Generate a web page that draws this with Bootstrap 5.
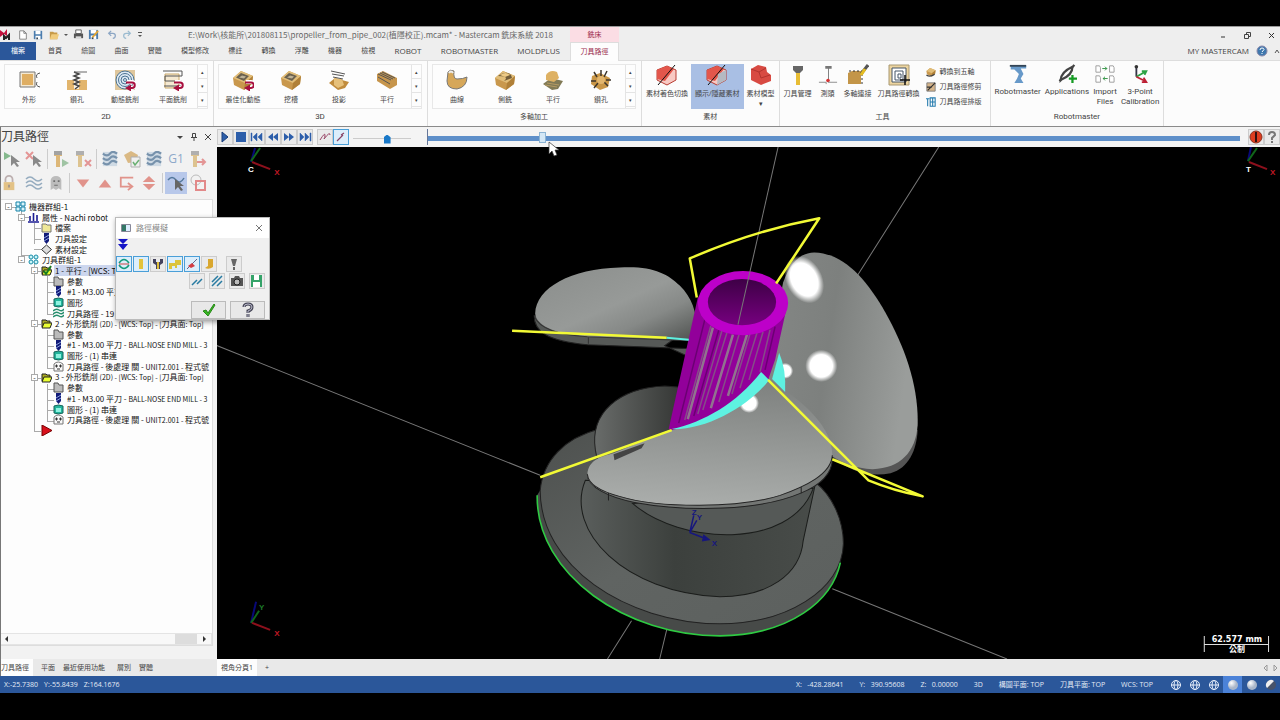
<!DOCTYPE html>
<html lang="zh-Hant">
<head>
<meta charset="utf-8">
<meta name="viewport" content="width=device-width, initial-scale=1">
<title>Mastercam 銑床系統 2018</title>
<link rel="stylesheet" href="https://cdn.jsdelivr.net/npm/bootstrap@5.3.0/dist/css/bootstrap.min.css">
<script src="https://cdn.jsdelivr.net/npm/bootstrap@5.3.0/dist/js/bootstrap.bundle.min.js"></script>
<style>
:root{--ui:"Open Sans","Noto Sans CJK TC",sans-serif;--chrome:#eeeeee;--blue:#2b579a;--ink:#444}
body{font-family:var(--ui);font-size:7px;line-height:10px;color:var(--ink);background:#000;padding:26px 0 27px}
.latin{font-size:8px}
.ribbon .latin{font-family:Roboto,"Noto Sans CJK TC",sans-serif}
svg{display:block;flex:none}
button,.btn{font-size:inherit;line-height:inherit;color:inherit;border-radius:0}
.btn{--bs-btn-color:var(--ink);--bs-btn-border-width:0}
.titlebar{height:16px;background:var(--chrome);border-top:1px solid #999}
.quick{width:188px}
.quick button{width:15px;height:15px}
.doc-title{width:382px;font-size:8px;font-family:"Noto Sans CJK TC",sans-serif;white-space:nowrap;color:#666}
.context{width:49px;background:#fbdde4;color:#9b2c4c}
.wincontrols{gap:14px;padding-right:4px}
.menu{height:19px;background:var(--chrome);border-bottom:1px solid #ddd}
.menu a{color:var(--ink);text-decoration:none;white-space:nowrap}
.menu .file-tab{width:36px;background:var(--blue);color:#fff}
.tabset{width:534px;padding:0 10px 0 12px}
.menu .active-tab{width:49px;height:19px;background:#fdfdfd;color:#9b2c4c;border:1px solid #ddd;border-bottom:0}
.ribbon{height:66px;background:#fcfcfc;border-bottom:1px solid #8a8a8a}
.group{border-right:1px solid #ddd;padding-top:3px}
.group-name{height:16px;line-height:16px;text-align:center}
.gallery{height:45px;border:1px solid #e8e8e8;background:#fdfdfd}
.tool{height:45px;gap:4px;white-space:nowrap;text-align:center}
.gallery .tool{width:48px;height:43px}
.plain .tool{gap:3px}
.tight{gap:6px}
.snug{gap:3px}
.tool.on{background:#a9bfe4}
.spin{width:10px;border-left:1px solid #e4e4e4}
.spin button{height:14px;border-bottom:1px solid #e4e4e4;font-size:5px;line-height:12px}
.w-gal{width:214px;padding-left:4px;padding-right:5px}
.side{width:217px;background:#f2f2f2;border-left:1px solid #777}
.side-title{height:20px;font-size:12px;line-height:18px}
.iconrow{height:24px}
.iconrow .btn{width:22px;height:22px;opacity:.75}
.iconrow .btn.on{background:#b8c8ea;opacity:1}
.vsep{width:1px;height:20px;background:#ccc;margin:0 2px}
.treebox{background:#fdfdfd;border:1px solid #ddd;border-left:0;width:212px;padding-top:1px;margin-bottom:13px}
.tree{height:235px;grid-auto-rows:minmax(0,1fr);font:8px/11px "Noto Sans CJK TC",sans-serif;color:#111}
.tree li{gap:3px;white-space:nowrap;min-width:0}
.tree .fine{font-size:7px}
.tree button{width:7px;height:7px;flex:none;font-size:7px;line-height:5px;border:1px solid #aaa;background:#fff;padding:0}
.tree i{width:7px;height:7px;flex:none}
.l0{padding-left:4px}.l1{padding-left:17px}.l2{padding-left:30px}.l3{padding-left:42px}
.sel{background:linear-gradient(90deg,transparent 53px,#ccd6ee 53px)}
.treelines{left:0;top:1px}
.hscroll{height:12px;background:#f8f8f8;border:1px solid #e4e4e4;border-left:0}
.hthumb{width:22px;height:10px;background:#ddd;margin-right:2px}
.bottomtabs{height:17px;background:#e9e9e9}
.bottomtabs a{color:var(--ink);text-decoration:none}
.bottomtabs .cur{background:#fdfdfd}
.playbar{height:20px;background:#f4f4f4}
.pb{width:16px;height:16px;border:1px solid #ccc;background:#eaeaea}
.pb.on{border-color:#4a9fd8;background:#dceefb}
input[type=range]{appearance:none;background:transparent;margin:0}
.speed{width:58px;height:14px;background:linear-gradient(#ccc,#ccc) 0 8px/100% 1px no-repeat!important}
.speed::-webkit-slider-thumb{appearance:none;width:7px;height:9px;background:#1978c8;clip-path:polygon(50% 0,100% 30%,100% 100%,0 100%,0 30%);margin-top:4px}
.timeline{height:16px;border-left:1px solid #679;background:linear-gradient(#5e8fc9,#5e8fc9) 0 7px/100% 5px no-repeat!important}
.timeline::-webkit-slider-thumb{appearance:none;width:7px;height:11px;background:#d4e7f5;border:1px solid #8cb4d4}
.dialogbox{left:115px;top:90px;width:155px;height:103px;background:#f0f0f0;border:1px solid #bbb;box-shadow:1px 2px 5px #0006}
.dialogbox header{height:20px;background:#fff;font-size:8px;color:#888}
.drow{gap:1px;height:17px}
.okb{width:35px;height:18px;border:1px solid #bbb;background:#e8e8e8}
.scene{background:#000;min-height:0}
.scene svg{width:100%;height:100%}
.statusbar{height:17px;background:var(--blue);color:#e4ebf6;white-space:nowrap}
.statusbar .on{background:#4b82d8}
.statusbar button{width:19px;height:17px;padding:0;border:0;background:none}
.stat{gap:16px;padding-right:13px}
.coords{gap:6px}
.pointer{left:548px;top:14px}
</style>
</head>
<body class="vh-100 d-flex flex-column overflow-hidden m-0">
<svg width="0" height="0" class="position-absolute" aria-hidden="true">
<defs>
<g id="loop"><path d="M3 2h5a3 3 0 0 1 0 6H6" fill="none" stroke="#fff" stroke-width="4"/><path d="M2 2.500h6a2.700 2.700 0 0 1 0 5.500H6" fill="none" stroke="#a8103f" stroke-width="2"/><path d="M7 4.500L1 8l6 3.500z" fill="#a8103f"/></g>
<symbol id="contour" viewBox="0 0 22 22"><path d="M2 3h15v15H2z" fill="#f5e9d2" stroke="#777"/><path d="M4 5h11v11H4z" fill="#dfae62"/><path d="M22 4q-5 1-3 5m3 9q-5-1-3-5" fill="none" stroke="#555"/></symbol>
<symbol id="drill" viewBox="0 0 22 22"><path d="M1 11h20v10H1z" fill="#e2b56d"/><path d="M8 11h5v9H8z" fill="#faf3e5"/><path d="M8 3l5 2-5 2 5 2-5 2 5 2-5 2 5 2-4 3" fill="none" stroke="#444" stroke-width="1.500"/><path d="M8 3h13" stroke="#666"/></symbol>
<symbol id="dyn" viewBox="0 0 22 22"><path d="M1 1h20v20H1z" fill="#dfc79d"/><g fill="#dce9f4" stroke="#4d7492"><circle cx="11" cy="11" r="9"/><circle cx="11" cy="11" r="6.500"/><circle cx="11" cy="11" r="4"/><circle cx="11" cy="11" r="1.500"/></g><use href="#loop" x="10" y="11"/></symbol>
<symbol id="face" viewBox="0 0 22 22"><path d="M3 5h14v14H3z" fill="#f5e9d2" stroke="#c9a86b"/><path d="M1 2h19v5H3v5h17v5H2" fill="none" stroke="#555"/><use href="#loop" x="10" y="11"/></symbol>
<symbol id="block" viewBox="0 0 22 22"><path d="M1 9L9 2l12 5-1 8-8 6L2 16z" fill="#c9984d"/><path d="M1 9L9 2l12 5-8 7z" fill="#e1bd78"/><path d="M13 14l8-7-1 8-8 6z" fill="#b08038"/></symbol>
<symbol id="pocketd" viewBox="0 0 22 22"><use href="#block"/><path d="M4 8.500L9 4l8 3-5 5z" fill="#6b614e"/><path d="M7 8.500l3-2 4 1-2 2z" fill="#bdb195"/><use href="#loop" x="11" y="11"/></symbol>
<symbol id="pocket" viewBox="0 0 22 22"><use href="#block"/><path d="M4 8.500L9 4l8 3-5 5z" fill="#6b614e"/><path d="M7 8.500l3-2 4 1-2 2z" fill="#bdb195"/></symbol>
<symbol id="project" viewBox="0 0 22 22"><path d="M1 14l6-5 14 4-4 6-7 2z" fill="#c18c3d"/><path d="M6 9l8 1 2 6-6 3-4-3z" fill="#e6c07a"/><path d="M3 2l14 3M4 5l12 2M5 8l10 2" stroke="#555"/></symbol>
<symbol id="parallel" viewBox="0 0 22 22"><path d="M1 5l6-3 14 7v7l-7 4L1 12z" fill="#c6954c"/><path d="M2 5l13 6M4 4l13 6M6 3l13 6M2 8l12 7" stroke="#555"/></symbol>
<symbol id="curve" viewBox="0 0 22 22"><path d="M2 3q2-3 6-1-1 8 3 8 6 0 10-2 0 10-10 12Q1 20 1 12z" fill="#d6a759" stroke="#777"/><path d="M3 4q2-3 4 0" fill="none" stroke="#eee" stroke-width="2"/></symbol>
<symbol id="swarf" viewBox="0 0 22 22"><use href="#block"/><path d="M4 7q8-6 13-1l1 3-8 3q6-5-6-5" fill="#725d39"/><path d="M6 6q6-4 10 0l-5 2z" fill="#edca85"/></symbol>
<symbol id="mpar" viewBox="0 0 22 22"><path d="M1 15l8-6 12 3-5 8-6 1z" fill="#817a56"/><path d="M4 6q4-6 11-3l2 6-5 4-8-2z" fill="#deb163"/><path d="M3 16l12 2M5 14l12 2" stroke="#b79c64"/></symbol>
<symbol id="mdrill" viewBox="0 0 22 22"><path d="M2 7l8-3 10 5-2 9-8 3L1 15z" fill="#c99647"/><path d="M4 3l3 5M17 2l-3 6M4 19l4-5M11 1v6M18 17l-4-4M1 12h5M16 11h5" stroke="#3c352b" stroke-width="1.500"/><circle cx="11" cy="11" r="4" fill="#e2b56d"/></symbol>
<symbol id="cube" viewBox="0 0 22 22"><path d="M1 6L11 2l9 4v10l-9 5-10-5z" fill="#f8c9c3" stroke="#b83c32"/><path d="M1 6L11 2l7 3-9 12-8-2z" fill="#e3564b"/></symbol>
<symbol id="cubeline" viewBox="0 0 22 22"><use href="#cube"/><path d="M19 1L2 21" stroke="#111"/></symbol>
<symbol id="cubegray" viewBox="0 0 22 22"><use href="#cube"/><path d="M12 10l8-4v10l-9 5z" fill="#b5b9c2"/><path d="M19 1L2 21" stroke="#111"/></symbol>
<symbol id="stock" viewBox="0 0 22 22"><path d="M1 5l7-4 8 2 1 5 4 3v6l-10 4-10-5z" fill="#d84a42"/><path d="M1 5l8 3 7-4M9 8l2 6 9-3" fill="none" stroke="#b3342e"/></symbol>
<symbol id="mill" viewBox="0 0 22 22"><path d="M6 2h10v4l-3 3H9L6 6z" fill="#666"/><path d="M9 9h4v12H9z" fill="#e8bd34"/></symbol>
<symbol id="probe" viewBox="0 0 22 22"><path d="M8 1h7v3h-3v12h-1V4H8z" fill="#777"/><circle cx="11" cy="17" r="2" fill="#d63131"/><path d="M1 19h8v2m2-2h10" stroke="#888" fill="none"/></symbol>
<symbol id="link" viewBox="0 0 22 22"><path d="M1 9l4-2h9v13H1z" fill="#c39548"/><path d="M2 7h13v13" fill="none" stroke="#333" stroke-dasharray="2"/><path d="M21 1l-7 9" stroke="#555" stroke-width="3"/><path d="M18 5l-4 6" stroke="#e5bd20" stroke-width="3"/></symbol>
<symbol id="xform" viewBox="0 0 22 22"><path d="M1 1h20v20H1z" fill="#ecd49f" stroke="#a89873"/><path d="M4 4h14v14H4zM7 7h8v9H7zM10 10h3v4h-3z" fill="#fff" stroke="#456"/><path d="M17 11v10m-5-5h10" fill="none" stroke="#111" stroke-width="1.500"/></symbol>
<symbol id="robot" viewBox="0 0 22 22"><path d="M3 2h17v3h-6l3 6-3 5 3 5H7l3-5 2-5-5-5H3z" fill="#6799c9"/><path d="M2 2h18" stroke="#345" stroke-width="2"/></symbol>
<symbol id="app" viewBox="0 0 22 22"><path d="M4 18q0-9 13-15 0 9-12 14zM3 19l2-4M16 5l3-4" fill="none" stroke="#444" stroke-width="2.500"/><path d="M17 12v9m-4-5h9" stroke="#169b24" stroke-width="2.500"/></symbol>
<symbol id="import" viewBox="0 0 22 22"><path d="M1 2h4l1 2v5H1zM16 2h4l1 2v5h-5zM1 13h4l1 2v5H1zM16 13h4l1 2v5h-5z" fill="#fff" stroke="#999"/><path d="M8 5h5m-2-2l2 2-2 2M14 16H9m2-2l-2 2 2 2" fill="none" stroke="#258c38"/></symbol>
<symbol id="axes3" viewBox="0 0 22 22"><path d="M7 3v11" stroke="#334" stroke-width="2"/><path d="M7 14l11-6m-5 0l5 0-2 4" stroke="#2da344" stroke-width="2" fill="none"/><path d="M7 14l10 5m-2-4l3 5-5 0" stroke="#bd2035" stroke-width="2" fill="none"/><circle cx="7" cy="3" r="2" fill="#333"/></symbol>
<symbol id="trim" viewBox="0 0 12 12"><path d="M1 1h10v10H1z" fill="#d5b48a" stroke="#777"/><path d="M2 10l9-9M1 6h6" stroke="#333" stroke-width="1.500"/></symbol>
<symbol id="nest" viewBox="0 0 12 12"><path d="M0 2h4M2 2v9M5 1h6v10H5zM8 1v10M5 6h6" stroke="#267cae" fill="none" stroke-width="1.300"/></symbol>
<symbol id="doc" viewBox="0 0 12 12"><path d="M2 1h5l3 3v7H2zM7 1v3h3" fill="#fff" stroke="#777"/></symbol>
<symbol id="disk" viewBox="0 0 12 12"><path d="M1 1h10v10H1z" fill="#4b7dae"/><path d="M3 1h6v4H3zM3 7h6v4H3z" fill="#fff"/><path d="M4 9h2v2H4z" fill="#345"/></symbol>
<symbol id="fold" viewBox="0 0 12 12"><path d="M1 2h4l1 1h4v8H1z" fill="#c79a48"/><path d="M3 5h9l-2 6H1z" fill="#f0cb7c"/></symbol>
<symbol id="print" viewBox="0 0 12 12"><path d="M3 1h6v4H3z" fill="#fff" stroke="#555"/><path d="M1 5h10v5H1z" fill="#555"/><path d="M3 8h6v3H3z" fill="#ddd"/></symbol>
<symbol id="saveas" viewBox="0 0 12 12"><use href="#disk"/><path d="M11 2L5 9" stroke="#e4a632" stroke-width="2"/></symbol>
<symbol id="undo" viewBox="0 0 12 12"><path d="M3 4h4a3 3 0 0 1 0 6M5 1L2 4l3 3" fill="none" stroke="#8ca6c4" stroke-width="1.500"/></symbol>
<symbol id="redo" viewBox="0 0 12 12"><path d="M9 4H5a3 3 0 0 0 0 6M7 1l3 3-3 3" fill="none" stroke="#9bbbd0" stroke-width="1.500"/></symbol>
<symbol id="ghost" viewBox="0 0 18 18"><path d="M3 17V6a6 5 0 0 1 12 0v11l-3-2-3 2-3-2z" fill="#aaa"/><path d="M6 6h2v2H6zm5 0h2v2h-2zM7 11h4v1H7z" fill="#444"/></symbol>
<symbol id="waves" viewBox="0 0 18 18"><path d="M1 5q4-4 8 0t8 0M1 9q4-4 8 0t8 0M1 13q4-4 8 0t8 0" fill="none" stroke="#7795af" stroke-width="1.500"/></symbol>
<symbol id="wavesb" viewBox="0 0 18 18"><path d="M1 1h16v16H1z" fill="#c4d3e0"/><path d="M1 3q5 4 8 0t8 0M1 8q5 4 8 0t8 0M1 13q5 4 8 0t8 0" fill="none" stroke="#4e7295" stroke-width="2.500"/></symbol>
<symbol id="cur" viewBox="0 0 18 18"><path d="M8 5v11l3-3 3 4 2-1-3-4h4z" fill="#666"/></symbol>
<symbol id="selgo" viewBox="0 0 18 18"><path d="M1 2l7 4-7 4z" fill="#61a66c"/><use href="#cur"/></symbol>
<symbol id="selno" viewBox="0 0 18 18"><path d="M1 2l7 7M8 2L1 9" stroke="#df7777" stroke-width="2"/><use href="#cur"/></symbol>
<symbol id="toolg" viewBox="0 0 18 18"><path d="M2 1h8v5H8v11H4V6H2z" fill="#d7a450"/><path d="M2 1h8v4H2z" fill="#888"/><path d="M10 9l7 4-7 4z" fill="#85b58a"/></symbol>
<symbol id="toolx" viewBox="0 0 18 18"><path d="M2 1h8v5H8v11H4V6H2z" fill="#d7b470"/><path d="M2 1h8v4H2z" fill="#999"/><path d="M11 10l6 6m0-6l-6 6" stroke="#df7777" stroke-width="2"/></symbol>
<symbol id="toola" viewBox="0 0 18 18"><path d="M2 1h8v5H8v11H4V6H2z" fill="#d7b470"/><path d="M2 1h8v4H2z" fill="#999"/><path d="M8 12h8m-3-3l3 3-3 3" stroke="#df7777" stroke-width="2" fill="none"/></symbol>
<symbol id="verify" viewBox="0 0 18 18"><path d="M1 5l7-4 7 4-2 7-8 1z" fill="#d2a660"/><path d="M8 7h9v10H8z" fill="#eee" stroke="#999"/><path d="M10 12l2 3 4-5" stroke="#3c9a48" fill="none" stroke-width="1.500"/></symbol>
<symbol id="lock" viewBox="0 0 18 18"><path d="M5 8V5a4 4 0 0 1 8 0v3" fill="none" stroke="#a99" stroke-width="2"/><path d="M3 8h12v9H3z" fill="#deb263"/><path d="M8 11h2v3H8z" fill="#876"/></symbol>
<symbol id="dn" viewBox="0 0 18 18"><path d="M2 5h14l-7 9z" fill="#dc7469"/></symbol>
<symbol id="up" viewBox="0 0 18 18"><path d="M2 14h14L9 5z" fill="#dc7469"/></symbol>
<symbol id="ins" viewBox="0 0 18 18"><path d="M16 3H2v10h11M10 9l5 4-5 4" fill="none" stroke="#dc7469" stroke-width="2"/></symbol>
<symbol id="ud" viewBox="0 0 18 18"><path d="M2 8h14L9 1zM2 10h14l-7 7z" fill="#dc7469"/></symbol>
<symbol id="selw" viewBox="0 0 18 18"><path d="M1 6q4-5 8 0t8-2" fill="none" stroke="#54789c" stroke-width="1.500"/><use href="#cur"/></symbol>
<symbol id="selq" viewBox="0 0 18 18"><circle cx="7" cy="6" r="5" fill="none" stroke="#aaa"/><path d="M7 7h9v9H7z" fill="none" stroke="#d66" stroke-width="2"/></symbol>
<symbol id="mach" viewBox="0 0 11 11"><path d="M1 1h4v4H1zM6 1h4v4H6zM1 6h4v4H1zM6 6h4v4H6z" fill="#d8f4fb" stroke="#1683a8"/></symbol>
<symbol id="bars" viewBox="0 0 11 11"><path d="M2 4v5M5.500 1v8M9 3v6M0 10h11" stroke="#1b1b92" stroke-width="1.600"/></symbol>
<symbol id="tfold" viewBox="0 0 11 11"><path d="M1 2h4l1 1h4v7H1z" fill="#efe898" stroke="#777"/></symbol>
<symbol id="bit" viewBox="0 0 11 11"><path d="M3 0h5v8L5.500 11 3 8z" fill="#111a78"/><path d="M3 5l5-3M3 8l5-3" stroke="#8ba1de"/></symbol>
<symbol id="dia" viewBox="0 0 11 11"><path d="M5.500 1l5 4.500-5 4.500-5-4.500z" fill="#ddd" stroke="#333"/></symbol>
<symbol id="grp" viewBox="0 0 11 11"><g fill="#c9f5f8" stroke="#188ba7"><circle cx="3" cy="3" r="2"/><circle cx="8" cy="3" r="2"/><circle cx="3" cy="8" r="2"/><circle cx="8" cy="8" r="2"/></g></symbol>
<symbol id="open" viewBox="0 0 11 11"><path d="M1 2h4l1 1h3v6H1z" fill="#aa2" stroke="#222"/><path d="M3 5h8l-2 5H1z" fill="#eaff33" stroke="#222"/></symbol>
<symbol id="openg" viewBox="0 0 11 11"><use href="#open"/><path d="M3 6l2 3 5-8" stroke="#187d22" stroke-width="2" fill="none"/></symbol>
<symbol id="gfold" viewBox="0 0 11 11"><path d="M1 1h4l1 2h4v7H1z" fill="#bbb" stroke="#555"/></symbol>
<symbol id="geo" viewBox="0 0 11 11"><path d="M1 2q4.500-2 9 0v7q-4.500 2-9 0z" fill="#22b49b" stroke="#17645a"/><path d="M3 4h5v4H3z" fill="#8ff2e0"/></symbol>
<symbol id="path" viewBox="0 0 11 11"><path d="M0 3q3-3 6-1t5-1M0 6q3-3 6-1t5-1M0 9q3-3 6-1t5-1" fill="none" stroke="#278e6e" stroke-width="1.500"/></symbol>
<symbol id="face2" viewBox="0 0 11 11"><path d="M1 10V3q4-4 9 0v7z" fill="#f8f8f8" stroke="#777"/><path d="M3 4h1v2H3zm4 0h1v2H7zM4 8h3" stroke="#333" fill="#333"/></symbol>
<symbol id="arrow" viewBox="0 0 11 11"><path d="M1 0l10 5.500L1 11z" fill="#d9101c" stroke="#700"/></symbol>
<symbol id="tri" viewBox="0 0 14 14"><path d="M4 2l6 5-6 5z" fill="#2c5eaa" stroke="#183d7a"/></symbol>
<symbol id="globe" viewBox="0 0 12 12"><circle cx="6" cy="6" r="4.500" fill="none" stroke="#e7eefb"/><ellipse cx="6" cy="6" rx="2" ry="4.500" fill="none" stroke="#e7eefb"/><path d="M1 6h10" stroke="#e7eefb"/></symbol>
<radialGradient id="ball" cx=".35" cy=".3"><stop offset="0" stop-color="#fff"/><stop offset="1" stop-color="#a9b6c9"/></radialGradient>
</defs></svg>

<header>
<div class="titlebar d-flex align-items-stretch">
 <div class="quick d-flex align-items-center">
  <svg width="14" height="14" viewBox="0 0 14 14"><path d="M0 2l4 3 3-4v7L4 6 0 9z" fill="#c2123d"/><path d="M4 12V8l2 2 3-3v5" fill="none" stroke="#222" stroke-width="2"/></svg>
  <button class="btn p-0 ms-1" aria-label="新檔"><svg width="10" height="10"><use href="#doc"/></svg></button>
  <button class="btn p-0" aria-label="儲存"><svg width="10" height="10"><use href="#disk"/></svg></button>
  <button class="btn p-0" aria-label="開啟"><svg width="12" height="10"><use href="#fold"/></svg></button>
  <svg width="6" height="6" viewBox="0 0 6 6"><path d="M1 2h4L3 4z" fill="#555"/></svg>
  <button class="btn p-0 ms-1" aria-label="列印"><svg width="11" height="11"><use href="#print"/></svg></button>
  <button class="btn p-0" aria-label="另存"><svg width="11" height="11"><use href="#saveas"/></svg></button>
  <button class="btn p-0 ms-1" aria-label="復原"><svg width="10" height="10"><use href="#undo"/></svg></button>
  <button class="btn p-0" aria-label="重做"><svg width="10" height="10"><use href="#redo"/></svg></button>
  <svg width="6" height="6" viewBox="0 0 6 6"><path d="M1 0h4v1H1zM1 3h4L3 5z" fill="#555"/></svg>
 </div>
 <div class="doc-title align-self-center">E:\Work\核能所\201808115\propeller_from_pipe_002(植隱校正).mcam* - Mastercam 銑床系統 2018</div>
 <div class="context d-flex align-items-center justify-content-center">銑床</div>
 <div class="wincontrols ms-auto d-flex align-items-center">
  <button class="btn p-0" aria-label="最小化"><svg width="10" height="10"><path d="M3 7h4" stroke="#333"/></svg></button>
  <button class="btn p-0" aria-label="還原"><svg width="10" height="10"><path d="M2.500 4.500h4v4h-4zM4.500 4V2.500h4v4H7" fill="none" stroke="#444"/></svg></button>
  <button class="btn p-0" aria-label="關閉"><svg width="10" height="10"><path d="M3 3l5 5m0-5L3 8" stroke="#333"/></svg></button>
 </div>
</div>
<nav class="menu d-flex align-items-center">
 <a href="#" class="file-tab h-100 d-flex align-items-center justify-content-center">檔案</a>
 <div class="tabset d-flex justify-content-between align-items-center">
  <a href="#">首頁</a><a href="#">繪圖</a><a href="#">曲面</a><a href="#">實體</a><a href="#">模型修改</a><a href="#">標註</a><a href="#">轉換</a><a href="#">浮雕</a><a href="#">機器</a><a href="#">檢視</a><a href="#" class="latin">ROBOT</a><a href="#" class="latin">ROBOTMASTER</a><a href="#" class="latin">MOLDPLUS</a>
 </div>
 <a href="#" class="active-tab d-flex align-items-center justify-content-center">刀具路徑</a>
 <a href="#" class="latin ms-auto">MY MASTERCAM</a>
 <svg width="31" height="12"><circle cx="13" cy="6" r="5" fill="#3f78ad" stroke="#88a"/><path d="M11 5q0-2 2-2t2 1.500L13 7m0 1v1" fill="none" stroke="#fff"/><path d="M26 8l2-3 2 3" fill="none" stroke="#555"/></svg>
</nav>
<div class="ribbon d-flex">
 <section class="group w-gal">
  <div class="gallery d-flex">
   <button class="btn p-0 tool d-flex flex-column align-items-center justify-content-center"><svg width="22" height="22"><use href="#contour"/></svg>外形</button>
   <button class="btn p-0 tool d-flex flex-column align-items-center justify-content-center"><svg width="22" height="22"><use href="#drill"/></svg>鑽孔</button>
   <button class="btn p-0 tool d-flex flex-column align-items-center justify-content-center"><svg width="22" height="22"><use href="#dyn"/></svg>動態銑削</button>
   <button class="btn p-0 tool d-flex flex-column align-items-center justify-content-center"><svg width="22" height="22"><use href="#face"/></svg>平面銑削</button>
   <div class="spin ms-auto d-flex flex-column"><button class="btn p-0">▴</button><button class="btn p-0">▾</button><button class="btn p-0">▾</button></div>
  </div>
  <div class="group-name latin">2D</div>
 </section>
 <section class="group w-gal">
  <div class="gallery d-flex">
   <button class="btn p-0 tool d-flex flex-column align-items-center justify-content-center"><svg width="22" height="22"><use href="#pocketd"/></svg>最佳化動態</button>
   <button class="btn p-0 tool d-flex flex-column align-items-center justify-content-center"><svg width="22" height="22"><use href="#pocket"/></svg>挖槽</button>
   <button class="btn p-0 tool d-flex flex-column align-items-center justify-content-center"><svg width="22" height="22"><use href="#project"/></svg>投影</button>
   <button class="btn p-0 tool d-flex flex-column align-items-center justify-content-center"><svg width="22" height="22"><use href="#parallel"/></svg>平行</button>
   <div class="spin ms-auto d-flex flex-column"><button class="btn p-0">▴</button><button class="btn p-0">▾</button><button class="btn p-0">▾</button></div>
  </div>
  <div class="group-name latin">3D</div>
 </section>
 <section class="group w-gal">
  <div class="gallery d-flex">
   <button class="btn p-0 tool d-flex flex-column align-items-center justify-content-center"><svg width="22" height="22"><use href="#curve"/></svg>曲線</button>
   <button class="btn p-0 tool d-flex flex-column align-items-center justify-content-center"><svg width="22" height="22"><use href="#swarf"/></svg>側銑</button>
   <button class="btn p-0 tool d-flex flex-column align-items-center justify-content-center"><svg width="22" height="22"><use href="#mpar"/></svg>平行</button>
   <button class="btn p-0 tool d-flex flex-column align-items-center justify-content-center"><svg width="22" height="22"><use href="#mdrill"/></svg>鑽孔</button>
   <div class="spin ms-auto d-flex flex-column"><button class="btn p-0">▴</button><button class="btn p-0">▾</button><button class="btn p-0">▾</button></div>
  </div>
  <div class="group-name">多軸加工</div>
 </section>
 <section class="group plain px-1">
  <div class="d-flex snug">
   <button class="btn p-0 tool d-flex flex-column align-items-center"><svg width="22" height="22"><use href="#cubeline"/></svg>素材著色切換</button>
   <button class="btn p-0 px-1 tool on d-flex flex-column align-items-center"><svg width="22" height="22"><use href="#cubegray"/></svg>顯示/隱藏素材</button>
   <button class="btn p-0 tool d-flex flex-column align-items-center"><svg width="22" height="22"><use href="#stock"/></svg><span>素材模型<br>▾</span></button>
  </div>
  <div class="group-name">素材</div>
 </section>
 <section class="group plain ps-1 pe-2">
  <div class="d-flex tight">
   <button class="btn p-0 tool d-flex flex-column align-items-center"><svg width="22" height="22"><use href="#mill"/></svg>刀具管理</button>
   <button class="btn p-0 tool d-flex flex-column align-items-center"><svg width="20" height="22"><use href="#probe"/></svg>測頭</button>
   <button class="btn p-0 tool d-flex flex-column align-items-center"><svg width="22" height="22"><use href="#link"/></svg>多軸連接</button>
   <button class="btn p-0 tool d-flex flex-column align-items-center"><svg width="22" height="22"><use href="#xform"/></svg>刀具路徑轉換</button>
   <div class="d-flex flex-column justify-content-around">
    <button class="btn p-0 d-flex align-items-center gap-1"><svg width="10" height="10" viewBox="0 0 22 22"><use href="#block"/><path d="M1 18q9 5 18-2" stroke="#444" fill="none" stroke-width="3"/></svg>轉換到五軸</button>
    <button class="btn p-0 d-flex align-items-center gap-1"><svg width="10" height="10"><use href="#trim"/></svg>刀具路徑修剪</button>
    <button class="btn p-0 d-flex align-items-center gap-1"><svg width="10" height="10"><use href="#nest"/></svg>刀具路徑排版</button>
   </div>
  </div>
  <div class="group-name">工具</div>
 </section>
 <section class="group plain px-1">
  <div class="d-flex gap-1 latin">
   <button class="btn p-0 tool d-flex flex-column align-items-center"><svg width="20" height="20"><use href="#robot"/></svg>Robotmaster</button>
   <button class="btn p-0 tool d-flex flex-column align-items-center"><svg width="20" height="20"><use href="#app"/></svg>Applications</button>
   <button class="btn p-0 tool d-flex flex-column align-items-center"><svg width="20" height="20"><use href="#import"/></svg><span>Import<br>Files</span></button>
   <button class="btn p-0 tool d-flex flex-column align-items-center"><svg width="20" height="20"><use href="#axes3"/></svg><span>3-Point<br>Calibration</span></button>
  </div>
  <div class="group-name latin">Robotmaster</div>
 </section>
</div>
</header>

<main class="flex-grow-1 d-flex position-relative" style="min-height:0">
 <aside class="side flex-shrink-0 d-flex flex-column">
  <div class="side-title d-flex align-items-center">刀具路徑
   <div class="ms-auto me-1 d-flex gap-1"><svg width="10" height="10"><path d="M2 4h6L5 7z" fill="#444"/></svg><svg width="10" height="10"><path d="M3.500 1.500h3v4h-3zM2 5.500h6M5 6v3" stroke="#444" fill="none"/></svg><svg width="10" height="10"><path d="M2 2l6 6m0-6L2 8" stroke="#444"/></svg></div>
  </div>
  <div class="iconrow d-flex align-items-center">
   <button class="btn p-0" aria-label="全選"><svg class="mx-auto" width="18" height="18"><use href="#selgo"/></svg></button><button class="btn p-0" aria-label="取消"><svg class="mx-auto" width="18" height="18"><use href="#selno"/></svg></button><span class="vsep"></span>
   <button class="btn p-0" aria-label="重新計算"><svg class="mx-auto" width="18" height="18"><use href="#toolg"/></svg></button><button class="btn p-0" aria-label="重新計算失效"><svg class="mx-auto" width="18" height="18"><use href="#toolx"/></svg></button><span class="vsep"></span>
   <button class="btn p-0" aria-label="模擬"><svg class="mx-auto" width="16" height="16"><use href="#wavesb"/></svg></button><button class="btn p-0" aria-label="驗證"><svg class="mx-auto" width="18" height="18"><use href="#verify"/></svg></button><button class="btn p-0" aria-label="選項"><svg class="mx-auto" width="16" height="16"><use href="#wavesb"/></svg></button><button class="btn p-0" style="font-size:12px;color:#6d91bd">G1</button><button class="btn p-0" aria-label="進給"><svg class="mx-auto" width="18" height="18"><use href="#toola"/></svg></button>
  </div>
  <div class="iconrow d-flex align-items-center">
   <button class="btn p-0" aria-label="鎖定"><svg width="16" height="16"><use href="#lock"/></svg></button><button class="btn p-0" aria-label="顯示"><svg class="mx-auto" width="18" height="18"><use href="#waves"/></svg></button><button class="btn p-0" aria-label="後處理"><svg class="mx-auto" width="16" height="16"><use href="#ghost"/></svg></button><span class="vsep"></span>
   <button class="btn p-0" aria-label="下移"><svg class="mx-auto" width="16" height="16"><use href="#dn"/></svg></button><button class="btn p-0" aria-label="上移"><svg class="mx-auto" width="16" height="16"><use href="#up"/></svg></button><button class="btn p-0" aria-label="插入"><svg class="mx-auto" width="18" height="16"><use href="#ins"/></svg></button><button class="btn p-0" aria-label="捲動"><svg class="mx-auto" width="16" height="16"><use href="#ud"/></svg></button><span class="vsep"></span>
   <button class="btn p-0 on" aria-label="僅顯示已選"><svg class="mx-auto" width="18" height="18"><use href="#selw"/></svg></button><button class="btn p-0" aria-label="顯示關聯"><svg class="mx-auto" width="18" height="18"><use href="#selq"/></svg></button>
  </div>
  <div class="treebox position-relative flex-grow-1 d-flex flex-column mt-1">
   <svg class="treelines position-absolute" width="60" height="235"><path d="M20 10v44M11 6h5M24 16h4M33 22v21M33 27h7M33 38h7M33 48h7M20 54h8M33 60v170h7M33 70h7M46 75v39M46 81h7M46 91h7M46 102h7M46 113h7M33 123h7M46 129v38M46 134h7M46 145h7M46 156h7M46 167h7M33 177h7M46 183v38M46 188h7M46 199h7M46 209h7M46 220h7" stroke="#aaa" fill="none" shape-rendering="crispEdges"/></svg>
   <ul class="tree list-unstyled m-0 d-grid position-relative">
    <li class="l0 d-flex align-items-center"><button>-</button><svg width="11" height="11"><use href="#mach"/></svg><span>機器群組-1</span></li>
    <li class="l1 d-flex align-items-center"><button>-</button><svg width="11" height="11"><use href="#bars"/></svg><span>屬性 - Nachi robot</span></li>
    <li class="l2 d-flex align-items-center"><i></i><svg width="11" height="11"><use href="#tfold"/></svg><span>檔案</span></li>
    <li class="l2 d-flex align-items-center"><i></i><svg width="11" height="11"><use href="#bit"/></svg><span>刀具設定</span></li>
    <li class="l2 d-flex align-items-center"><i></i><svg width="11" height="11"><use href="#dia"/></svg><span>素材設定</span></li>
    <li class="l1 d-flex align-items-center"><button>-</button><svg width="11" height="11"><use href="#grp"/></svg><span>刀具群組-1</span></li>
    <li class="l2 sel d-flex align-items-center"><button>-</button><svg width="11" height="11"><use href="#openg"/></svg><span>1 - 平行 - [WCS: T</span></li>
    <li class="l3 d-flex align-items-center"><i></i><svg width="11" height="11"><use href="#gfold"/></svg><span>參數</span></li>
    <li class="l3 d-flex align-items-center"><i></i><svg width="11" height="11"><use href="#bit"/></svg><span>#1 - M3.00 平刀</span></li>
    <li class="l3 d-flex align-items-center"><i></i><svg width="11" height="11"><use href="#geo"/></svg><span>圖形</span></li>
    <li class="l3 d-flex align-items-center"><i></i><svg width="11" height="11"><use href="#path"/></svg><span>刀具路徑 - 19</span></li>
    <li class="l2 d-flex align-items-center"><button>-</button><svg width="11" height="11"><use href="#open"/></svg><span>2 - 外形銑削 <span class="fine">(2D) - [WCS: Top] - [</span>刀具面<span class="fine">: Top]</span></span></li>
    <li class="l3 d-flex align-items-center"><i></i><svg width="11" height="11"><use href="#gfold"/></svg><span>參數</span></li>
    <li class="l3 d-flex align-items-center"><i></i><svg width="11" height="11"><use href="#bit"/></svg><span>#1 - M3.00 平刀 - <span class="fine">BALL-NOSE END MILL - 3</span></span></li>
    <li class="l3 d-flex align-items-center"><i></i><svg width="11" height="11"><use href="#geo"/></svg><span>圖形 - (1) 串連</span></li>
    <li class="l3 d-flex align-items-center"><i></i><svg width="11" height="11"><use href="#face2"/></svg><span>刀具路徑 - 後處理 關 - <span class="fine">UNIT2.001 - </span>程式號</span></li>
    <li class="l2 d-flex align-items-center"><button>-</button><svg width="11" height="11"><use href="#open"/></svg><span>3 - 外形銑削 <span class="fine">(2D) - [WCS: Top] - [</span>刀具面<span class="fine">: Top]</span></span></li>
    <li class="l3 d-flex align-items-center"><i></i><svg width="11" height="11"><use href="#gfold"/></svg><span>參數</span></li>
    <li class="l3 d-flex align-items-center"><i></i><svg width="11" height="11"><use href="#bit"/></svg><span>#1 - M3.00 平刀 - <span class="fine">BALL-NOSE END MILL - 3</span></span></li>
    <li class="l3 d-flex align-items-center"><i></i><svg width="11" height="11"><use href="#geo"/></svg><span>圖形 - (1) 串連</span></li>
    <li class="l3 d-flex align-items-center"><i></i><svg width="11" height="11"><use href="#face2"/></svg><span>刀具路徑 - 後處理 關 - <span class="fine">UNIT2.001 - </span>程式號</span></li>
    <li class="l2 d-flex align-items-center"><i></i><svg width="11" height="11"><use href="#arrow"/></svg></li>
   </ul>
   <div class="hscroll mt-auto d-flex align-items-center justify-content-between"><svg width="12" height="10"><path d="M7 2v6L4 5z" fill="#333"/></svg><span class="hthumb ms-auto"></span><svg width="12" height="10"><path d="M4 2v6l3-3z" fill="#333"/></svg></div>
  </div>
  <nav class="bottomtabs d-flex align-items-stretch">
   <a href="#" class="cur d-flex align-items-center pe-1">刀具路徑</a><a href="#" class="d-flex align-items-center ps-1 ms-1">平面</a><a href="#" class="d-flex align-items-center ps-2">最近使用功能</a><a href="#" class="d-flex align-items-center ps-2 ms-1">層別</a><a href="#" class="d-flex align-items-center ps-2">實體</a>
  </nav>
 </aside>

 <section class="flex-grow-1 d-flex flex-column" style="min-width:0">
  <div class="playbar d-flex align-items-center">
   <button class="btn p-0 pb" aria-label="播放"><svg width="14" height="14"><use href="#tri"/></svg></button>
   <button class="btn p-0 pb" aria-label="停止"><svg width="14" height="14"><path d="M2 2h10v10H2z" fill="#2c5eaa"/></svg></button>
   <button class="btn p-0 pb" aria-label="最前"><svg width="14" height="14"><path d="M1 3h1v8H1zM7 3L3 7l4 4zM12 3L8 7l4 4z" fill="#2c5eaa" stroke="#2c5eaa" stroke-width=".5"/></svg></button>
   <button class="btn p-0 pb" aria-label="後退"><svg width="14" height="14"><path d="M7 3L2 7l5 4zM12 3L7 7l5 4z" fill="#2c5eaa"/></svg></button>
   <button class="btn p-0 pb" aria-label="前進"><svg width="14" height="14"><path d="M2 3l5 4-5 4zM7 3l5 4-5 4z" fill="#2c5eaa"/></svg></button>
   <button class="btn p-0 pb" aria-label="最後"><svg width="14" height="14"><path d="M2 3l4 4-4 4zM7 3l4 4-4 4zM12 3h1v8h-1z" fill="#2c5eaa" stroke="#2c5eaa" stroke-width=".5"/></svg></button>
   <button class="btn p-0 pb ms-1" aria-label="軌跡"><svg width="14" height="14"><path d="M2 10q5-8 5-5T6 9q6-8 6-4" fill="none" stroke="#946"/></svg></button>
   <button class="btn p-0 pb on" aria-label="執行"><svg width="14" height="14"><path d="M3 11l6-6M7 5l3-2" fill="none" stroke="#846" stroke-width="1.200"/></svg></button>
   <input class="speed ms-1" type="range" aria-label="速度" min="0" max="100" value="60">
   <input class="timeline ms-3 flex-grow-1" type="range" aria-label="進度" min="0" max="1000" value="138">
   <button class="btn p-0 pb ms-2" aria-label="停止條件"><svg width="14" height="14"><circle cx="7" cy="7" r="6" fill="#df3d1f" stroke="#832"/><path d="M7 2v10" stroke="#311" stroke-width="2"/></svg></button>
   <button class="btn p-0 pb" aria-label="說明"><svg width="14" height="14"><path d="M4 5q0-3 3-3t3 3L7 8v2m0 1v2" fill="none" stroke="#777" stroke-width="2"/></svg></button>
  </div>
  <div class="scene flex-grow-1">
  <svg viewBox="217 148 1063 510" preserveAspectRatio="xMidYMid slice">
   <defs>
    <linearGradient id="g1" x1="0" y1="0" x2="1" y2="1"><stop offset="0" stop-color="#8a8d8b"/><stop offset=".5" stop-color="#979a98"/><stop offset=".7" stop-color="#868987"/><stop offset="1" stop-color="#4d504e"/></linearGradient>
    <linearGradient id="g2" x1="0" y1="0" x2="1" y2=".2"><stop offset="0" stop-color="#858886"/><stop offset=".5" stop-color="#7d807e"/><stop offset="1" stop-color="#9a9d9b"/></linearGradient>
    <linearGradient id="g3" x1=".5" y1="0" x2=".4" y2="1"><stop offset="0" stop-color="#7e817f"/><stop offset="1" stop-color="#aaadab"/></linearGradient>
    <linearGradient id="g4" x1="0" y1="0" x2="1" y2="0"><stop offset="0" stop-color="#5a5e5c"/><stop offset=".4" stop-color="#3c403d"/><stop offset="1" stop-color="#484c49"/></linearGradient>
    <linearGradient id="g5" x1="0" y1="0" x2="1" y2="1"><stop offset="0" stop-color="#4d504e"/><stop offset=".5" stop-color="#606462"/><stop offset="1" stop-color="#5c605e"/></linearGradient>
    <linearGradient id="g6" x1="0" y1="0" x2="1" y2="0"><stop offset="0" stop-color="#696c6a"/><stop offset="1" stop-color="#2f312f"/></linearGradient>
    <linearGradient id="hole" x1="0" y1="0" x2="0" y2="1"><stop offset="0" stop-color="#3e0046"/><stop offset="1" stop-color="#76007f"/></linearGradient>
    <radialGradient id="hot"><stop offset="0" stop-color="#fff"/><stop offset=".7" stop-color="#fff"/><stop offset="1" stop-color="#fff" stop-opacity="0"/></radialGradient>
   </defs>
   <path d="M938 148L857 276M217 345l324 130M832 588l174 70M632 620l-24 38M667 629l-7 29" stroke="#777"/>
   <path d="M538 495C537 575 628 635 720 635C790 634 832 600 840 562L842 530L541 490z" fill="#474a48"/>
   <path d="M541 490C544 460 565 438 600 429L815 482C832 495 843 520 843 543C842 590 785 623 720 623C625 622 541 565 541 490z" fill="url(#g5)" stroke="#222"/>
   <path d="M538 495C537 575 628 635 720 635C790 634 832 600 840 562" fill="none" stroke="#2fca43" stroke-width="1.600"/>
   <path d="M596 450C590 412 620 388 665 386L690 388L690 450L600 470z" fill="url(#g6)" stroke="#222"/>
   <path d="M586 480C565 530 625 592 720 596C768 596 800 574 803 540L815 484z" fill="url(#g4)" stroke="#1b1d1b"/>
   <path d="M633 503C680 544 790 550 813 488z" fill="#555957" stroke="#1b1d1b"/>
   <path d="M535 316C535 332 548 341 588 345L692 349L689 357L665 346L694 325z" fill="#565957" stroke="#222"/>
   <path d="M536 314C537 288 572 269 620 268C652 266 668 274 680 286C692 298 697 312 697 330L692 341L588 337C560 334 538 328 536 314z" fill="url(#g1)"/>
   <path d="M535 316C540 330 560 335 588 337L692 341M589 337v7" fill="none" stroke="#333"/>
   <path d="M830 455C850 472 870 477 890 473C908 468 916 450 917 430z" fill="#555"/>
   <path d="M760 400L783 283C790 263 801 253 814 253C844 254 866 280 885 313C904 347 918 385 917 425C915 452 900 468 872 469C855 468 843 463 830 455z" fill="url(#g2)"/>
   <ellipse cx="804" cy="280" rx="18" ry="25" transform="rotate(-28 804 280)" fill="url(#hot)"/>
   <circle cx="821" cy="366" r="16" fill="url(#hot)"/><circle cx="785" cy="371" r="8" fill="url(#hot)"/>
   <path d="M588 474C588 487 610 497 635 502C690 512 760 510 800 493C820 485 832 474 832 458z" fill="#737674" stroke="#222"/>
   <path d="M588 474C589 459 603 456 614 453L672 429Q730 415 768 378C790 394 832 420 832 455C831 474 805 486 780 495C740 508 660 508 620 496C601 491 588 484 588 474z" fill="url(#g3)"/>
   <path d="M588 474C589 484 601 491 620 496C660 508 740 508 780 495C805 486 831 474 832 455M609 493v7M801 487v6" fill="none" stroke="#222"/>
   <path d="M614 454L645 443L642 448L615 460z" fill="#444"/><circle cx="749" cy="403" r="10" fill="url(#hot)"/>
   <path d="M698 298L669 429L672 430C704 423 737 404 761 373L768 380L775 360L787 306z" fill="#92009a"/>
   <g stroke="#854d88" stroke-width="1.500" fill="none"><path d="M711 326L685 420M722 331L698 414M727 333L703 410M739 335L719 402M750 334L732 394M757 333L740 388M763 332L749 380M770 330L760 372"/><path d="M713 328L688 419M747 335L728 396M733 335L711 408" stroke="#91738f" stroke-width="2.500"/><path d="M705 320L679 423M719 330L694 416M775 327L765 370" stroke="#6b0073"/></g>
   <ellipse cx="743" cy="303.500" rx="45" ry="32" fill="#bd00c9"/><ellipse cx="742" cy="302.500" rx="34" ry="23" fill="url(#hole)"/>
   <path d="M778 148L738 325" stroke="#777"/>
   <path d="M672 429C704 422 737 403 761 372L769 380C750 405 708 430 672 429z" fill="#5ef1e1"/>
   <path d="M779 353Q786 369 785 392L772 379z" fill="#5ef1e1"/>
   <g fill="none" stroke="#f2fa35" stroke-width="2.500" stroke-linejoin="round"><path d="M697 298L690 259Q755 231 819 219L776 284M513 331L667 338M541 477L672 430M768 380L868 480Q892 490 922 496L832 459"/></g>
   <path d="M667 338L689 340" stroke="#5ef1e1" stroke-width="2"/>
   <g stroke="#17177d" stroke-width="1.500" fill="#17177d"><path d="M690 532L694 515M690 532L697 520M690 532L708 539M704 535l5 4-6 1z"/></g>
   <g font-family="Liberation Sans,sans-serif" font-size="8" font-weight="700"><text x="692" y="515" fill="#17177d">Z</text><text x="697" y="520" fill="#17177d">Y</text><text x="712" y="545" fill="#17177d">X</text>
   <g fill="none" stroke-width="2"><path d="M253 622L258 601" stroke="#080878"/><path d="M253 622l8-12" stroke="#11651b"/><path d="M254 622l18 7" stroke="#8d101c"/><path d="M253 163l4-14" stroke="#080878"/><path d="M253 162l9-13" stroke="#11651b"/><path d="M254 163l18 7" stroke="#8d101c"/><path d="M1246 162l3-14" stroke="#080878"/><path d="M1246 162l9-13" stroke="#11651b"/><path d="M1247 163l18 7" stroke="#8d101c"/></g>
   <text x="261" y="609" fill="#1c7b28">Y</text><text x="276" y="635" fill="#c01824">X</text><text x="276" y="176" fill="#c01824">X</text><text x="1268" y="176" fill="#c01824">X</text><text x="250" y="173" fill="#fff">C</text><text x="1244" y="173" fill="#fff">T</text></g>
   <path d="M1202.500 635v16M1266.500 635v16M1203 643.500h63" stroke="#ddd"/>
   <g fill="#fff" font-weight="700" font-size="8" text-anchor="middle" font-family="DejaVu Sans,Noto Sans CJK TC,sans-serif"><text x="1235" y="641">62.577 mm</text><text x="1235" y="651">公制</text></g>
  </svg>
  </div>
  <nav class="bottomtabs d-flex align-items-stretch"><a href="#" class="cur d-flex align-items-center px-1">視角分頁1</a><a href="#" class="d-flex align-items-center ps-2">+</a><svg class="ms-auto align-self-center" width="24" height="10"><path d="M11 2v6L8 5zM18 2v6l3-3z" fill="none" stroke="#999"/></svg></nav>
 </section>

 <svg class="pointer position-absolute" width="12" height="18" aria-hidden="true"><path d="M1 1v12l3-3 2 5 3-1-2-5h4z" fill="#fff" stroke="#333" stroke-width=".7"/></svg>

 <div class="dialogbox position-absolute d-flex flex-column" role="dialog" aria-label="路徑模擬">
  <header class="d-flex align-items-center px-1 gap-1"><svg width="12" height="10"><path d="M1.500 1.500h9v7h-9z" fill="#def" stroke="#889"/><path d="M2 2h4v6H2z" fill="#376"/></svg>路徑模擬<button class="btn p-0 ms-auto" aria-label="關閉"><svg width="12" height="12"><path d="M3 3l6 6m0-6L3 9" stroke="#777"/></svg></button></header>
  <button class="btn p-0 align-self-start" aria-label="展開"><svg width="14" height="14"><path d="M2 1h10L7 6zM2 6h10l-5 6z" fill="#1515c7"/></svg></button>
  <div class="drow d-flex mt-1">
   <button class="btn p-0 pb on" aria-label="顏色"><svg width="14" height="14"><path d="M2 6q5-7 10 0M2 8q5 7 10 0" fill="none" stroke="#139a7c" stroke-width="1.500"/><path d="M2 7h10" stroke="#c44"/></svg></button>
   <button class="btn p-0 pb on" aria-label="刀具"><svg width="14" height="14"><path d="M5 2h4v10H5z" fill="#e3c33c"/></svg></button>
   <button class="btn p-0 pb" aria-label="夾頭"><svg width="14" height="14"><path d="M2 2h3v3h4V2h3v4L9 8v4H5V8L2 6z" fill="#43415c"/><path d="M6 5h2v7H6z" fill="#dfbe39"/></svg></button>
   <button class="btn p-0 pb on" aria-label="快速"><svg width="14" height="14"><path d="M1 12V6h6V3h6v5H9v3H7V9H4v3z" fill="#dcc43c"/></svg></button>
   <button class="btn p-0 pb on" aria-label="端點"><svg width="14" height="14"><path d="M2 12L12 2" stroke="#668"/><path d="M3 9l4-3 3 3-4 2z" fill="#d23b43"/></svg></button>
   <button class="btn p-0 pb" aria-label="著色"><svg width="14" height="14"><path d="M6 2h5v8q-4 3-8 1l3-2z" fill="#d9a72e"/></svg></button>
   <button class="btn p-0 pb ms-2" aria-label="設定"><svg width="14" height="14"><path d="M4 2h6L8 9H6zM6 10h2v3H6z" fill="#666"/></svg></button>
  </div>
  <div class="drow d-flex gap-1 justify-content-end pe-1">
   <button class="btn p-0 pb" aria-label="追蹤"><svg width="14" height="14"><path d="M2 11l5-5M7 10l5-5" stroke="#287ba2" stroke-width="1.500"/></svg></button><button class="btn p-0 pb" aria-label="追蹤全部"><svg width="14" height="14"><path d="M2 8l6-6M2 12L12 2M7 12l5-5" stroke="#287ba2" stroke-width="1.500"/></svg></button><button class="btn p-0 pb" aria-label="快照"><svg width="14" height="14"><path d="M1 4h3l1-2h4l1 2h3v8H1z" fill="#555"/><circle cx="7" cy="8" r="3" fill="#bbb" stroke="#222"/></svg></button><button class="btn p-0 pb" aria-label="儲存"><svg width="14" height="14"><path d="M1 1h11v12H1z" fill="#35a369"/><path d="M4 1h5v5H4zM3 8h7v5H3z" fill="#fff"/></svg></button>
  </div>
  <div class="d-flex gap-1 justify-content-end mt-auto pe-1"><button class="btn p-0 okb" aria-label="確定"><svg class="mx-auto" width="16" height="14"><path d="M2 8l3-1 2 3 6-9 1 1-7 11z" fill="#38b923" stroke="#278818"/></svg></button><button class="btn p-0 okb" aria-label="說明"><svg class="mx-auto" width="16" height="16"><path d="M4 5q0-3 4-3t4 3-4 4v2m0 1v3" fill="none" stroke="#445" stroke-width="3"/><path d="M4 5q0-3 4-3t4 3-4 4v2m0 1v3" fill="none" stroke="#bbc"/></svg></button></div>
 </div>
</main>

<footer class="statusbar d-flex align-items-center">
 <div class="d-flex coords ps-1"><span>X:-25.7380</span><span>Y:-55.8439</span><span>Z:164.1676</span></div>
 <div class="stat ms-auto d-flex align-items-center"><span>X: &nbsp; -428.28641</span><span>Y: &nbsp; 390.95608</span><span>Z: &nbsp; 0.00000</span><span>3D</span><span>構圖平面: TOP</span><span>刀具平面: TOP</span><span>WCS: TOP</span></div>
 <div class="d-flex">
  <button aria-label="線框"><svg class="mx-auto" width="12" height="12"><use href="#globe"/></svg></button><button aria-label="隱藏線"><svg class="mx-auto" width="12" height="12"><use href="#globe"/></svg></button><button aria-label="移除隱藏線"><svg class="mx-auto" width="12" height="12"><use href="#globe"/></svg></button>
  <button class="on" aria-label="邊框著色"><svg class="mx-auto" width="12" height="12"><circle cx="6" cy="6" r="5" fill="url(#ball)"/></svg></button><button aria-label="著色"><svg class="mx-auto" width="12" height="12"><circle cx="6" cy="6" r="5" fill="url(#ball)"/></svg></button><button aria-label="透明"><svg class="mx-auto" width="12" height="12"><circle cx="6" cy="6" r="5" fill="#47536a"/><path d="M2 9L9 2A5 5 0 0 0 2 9z" fill="#eee"/></svg></button>
 </div>
</footer>
</body>
</html>
